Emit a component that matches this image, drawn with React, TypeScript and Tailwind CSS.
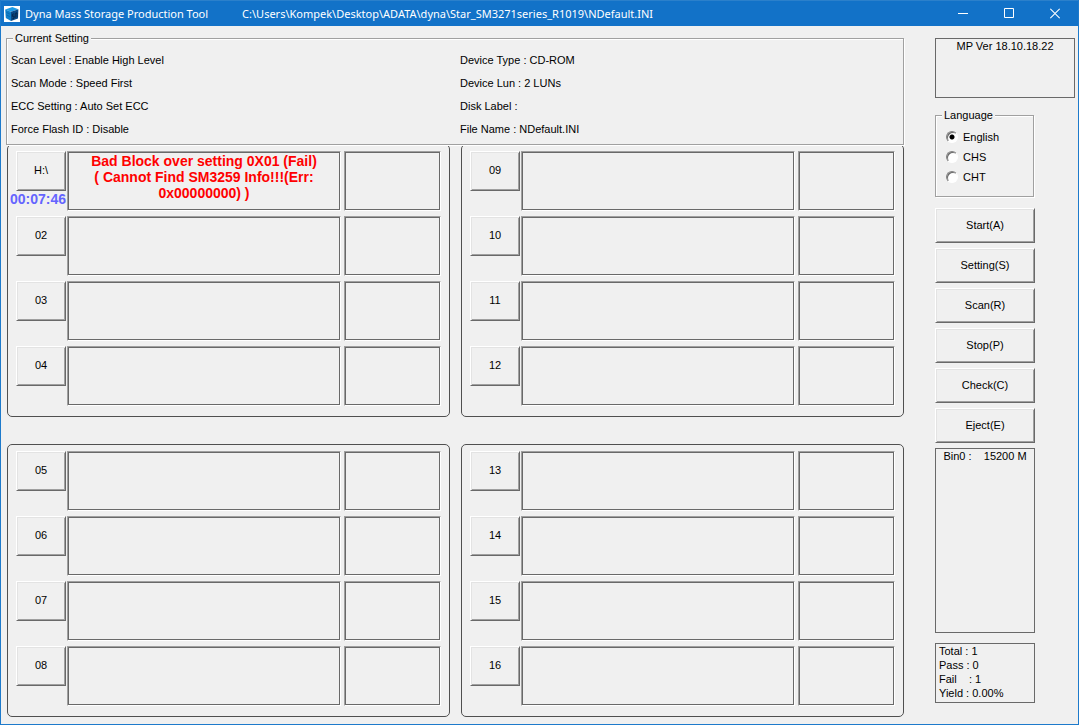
import React from 'react';

type Port = {
  label: string;
  time?: string;
  message?: string[];
};

const settingsLeft = [
  "Scan Level : Enable High Level",
  "Scan Mode : Speed First",
  "ECC Setting : Auto Set ECC",
  "Force Flash ID : Disable"
];

const settingsRight = [
  "Device Type : CD-ROM",
  "Device Lun : 2 LUNs",
  "Disk Label :",
  "File Name : NDefault.INI"
];

// panels in reading order: top left, top right, bottom left, bottom right
const panels: Port[][] = [
  [
    {
      label: "H:\\",
      time: "00:07:46",
      message: [
        "Bad Block over setting 0X01 (Fail)",
        "( Cannot Find SM3259 Info!!!(Err:",
        "0x00000000) )"
      ]
    },
    { label: "02" },
    { label: "03" },
    { label: "04" }
  ],
  [{ label: "09" }, { label: "10" }, { label: "11" }, { label: "12" }],
  [{ label: "05" }, { label: "06" }, { label: "07" }, { label: "08" }],
  [{ label: "13" }, { label: "14" }, { label: "15" }, { label: "16" }]
];

const actions = ["Start(A)", "Setting(S)", "Scan(R)", "Stop(P)", "Check(C)", "Eject(E)"];

const languages = ["English", "CHS", "CHT"];

const stats = ["Total : 1", "Pass : 0", "Fail    : 1", "Yield : 0.00%"];

const raised =
  "border border-t-white border-l-white border-r-[#696969] border-b-[#696969] shadow-[inset_1px_1px_0_#e3e3e3,inset_-1px_-1px_0_#a0a0a0] active:border-[#696969]";

const sunken =
  "border border-t-[#a0a0a0] border-l-[#a0a0a0] border-r-white border-b-white shadow-[inset_0_0_0_1px_#696969]";

const etched = "border border-[#a0a0a0] shadow-[1px_1px_0_#fff,inset_1px_1px_0_#fff]";

const AppIcon = () => (
  <svg width="16" height="16" viewBox="0 0 16 16" aria-hidden="true">
    <rect width="16" height="16" fill="#fff" />
    <path d="M1.2 3.4 8.4 1 14.4 3.2 7 5.8Z" fill="#1d9be6" />
    <path d="M1.2 3.4 7 5.8V15L1.8 12Z" fill="#0f7fca" />
    <path d="M7 5.8 14.4 3.2 14 12.4 7 15Z" fill="#0a4a86" />
    <path d="M8.4 8.4 10 7.8M8.4 8.4v2l1.6-.4v2.2l-1.6.6M11.2 11.8V7.4l1.8-.6v4.4" fill="none" stroke="#06213f" strokeWidth="0.8" />
    <path d="M2.4 6.4l3.4 1.6M2.6 9l3.2 1.6" stroke="#0b5d9c" strokeWidth="0.6" />
  </svg>
);

const TitleBar = () => (
  <header className="flex h-[26px] items-center border-t border-[#2b80cb] bg-[#1272c8] pl-[3px] font-['Noto_Sans','Open_Sans',sans-serif] text-[11px] leading-4 text-white">
    <AppIcon />
    <h1 className="ml-[5px] flex flex-1 gap-[34px] whitespace-nowrap">
      <span>Dyna Mass Storage Production Tool</span>
      <span>C:\Users\Kompek\Desktop\ADATA\dyna\Star_SM3271series_R1019\NDefault.INI</span>
    </h1>
    <button type="button" aria-label="Minimize" className="flex h-full w-[46px] items-center justify-center">
      <svg width="10" height="11" viewBox="0 0 10 11" stroke="#fff">
        <path d="M0 5.5h10" />
      </svg>
    </button>
    <button type="button" aria-label="Maximize" className="flex h-full w-[46px] items-center justify-center">
      <svg width="10" height="11" viewBox="0 0 10 11" fill="none" stroke="#fff">
        <path d="M.5.5h9v9h-9z" />
      </svg>
    </button>
    <button type="button" aria-label="Close" className="flex h-full w-[46px] items-center justify-center">
      <svg width="10" height="11" viewBox="0 0 10 11" stroke="#fff" strokeWidth="1.2">
        <path d="M.3.8l9.4 9.4M9.7.8.3 10.2" />
      </svg>
    </button>
  </header>
);

const PortRow = ({ port }: { port: Port }) => (
  <div className="flex h-[60px]">
    <div className="flex w-[58px] flex-col items-end">
      <button type="button" className={`h-10 w-[50px] pb-[2px] ${raised}`}>
        {port.label}
      </button>
      {port.time && (
        <time className="text-[14px] leading-4 font-bold text-[#6464ff]">{port.time}</time>
      )}
    </div>
    <div className={`ml-px flex-1 pt-px text-center text-[14px] leading-4 font-bold text-[#f00] ${sunken}`}>
      {port.message?.map((line) => (
        <p key={line} className="whitespace-nowrap">{line}</p>
      ))}
    </div>
    <div className={`ml-[3px] w-[97px] ${sunken}`} />
  </div>
);

const SettingsGroup = () => (
  <fieldset className={`relative z-10 h-[113px] bg-[#f0f0f0] pl-1 ${etched}`}>
    <legend className="ml-[2px] bg-[#f0f0f0] px-[2px] leading-[13px]">Current Setting</legend>
    <div className="grid grid-cols-2 gap-x-[6px] pt-1">
      {[settingsLeft, settingsRight].map((column, index) => (
        <ul key={index} className="leading-[23px] whitespace-nowrap">
          {column.map((item) => (
            <li key={item}>{item}</li>
          ))}
        </ul>
      ))}
    </div>
  </fieldset>
);

const LanguageGroup = () => (
  <fieldset className={`mt-[11px] h-[88px] w-[99px] pl-[10px] ${etched}`}>
    <legend className="-ml-1 bg-[#f0f0f0] px-[2px] leading-[13px]">Language</legend>
    <div className="pt-[5px]">
      {languages.map((language) => (
        <label key={language} className="flex h-5 items-center gap-[5px]">
          <input
            type="radio"
            name="language"
            defaultChecked={language === "English"}
            className="size-3 appearance-none rounded-full border border-t-[#808080] border-r-white border-b-white border-l-[#808080] bg-white shadow-[inset_1px_1px_0_#696969] checked:bg-[radial-gradient(circle,#000_2px,#fff_3px)]"
          />
          {language}
        </label>
      ))}
    </div>
  </fieldset>
);

const Sidebar = () => (
  <aside className="flex w-[140px] flex-col pt-[6px]">
    <div className="h-[60px] border border-[#696969] text-center leading-[14px]">MP Ver 18.10.18.22</div>
    <LanguageGroup />
    <div className="mt-[11px] flex w-[100px] flex-col gap-[5px]">
      {actions.map((action) => (
        <button key={action} type="button" className={`h-[35px] ${raised}`}>
          {action}
        </button>
      ))}
      <div className="h-[185px] border border-[#696969] text-center leading-[14px] whitespace-pre">
        {"Bin0 :    15200 M"}
      </div>
    </div>
    <div className="mt-[10px] h-[60px] w-[100px] border border-[#696969] pl-[3px] leading-[14px] whitespace-pre">
      {stats.map((stat) => (
        <p key={stat}>{stat}</p>
      ))}
    </div>
  </aside>
);

const App = () => {
  return (
    <div className="min-h-screen border-x border-b border-[#1d7acb] bg-[#f0f0f0] font-['Liberation_Sans',Arial,sans-serif] text-[11px] text-black">
      <TitleBar />
      <div className="flex gap-[31px] pt-[6px] pr-[3px] pb-[7px] pl-[5px]">
        <main className="min-w-0 flex-1">
          <SettingsGroup />
          <div className="-mt-px grid grid-cols-2 gap-x-[11px] gap-y-[27px] pl-px">
            {panels.map((ports, index) => (
              <section
                key={index}
                className="flex flex-col gap-[5px] rounded-[5px] border border-[#505050] pt-[6px] pr-[8px] pb-[10px]"
              >
                {ports.map((port) => (
                  <PortRow key={port.label} port={port} />
                ))}
              </section>
            ))}
          </div>
        </main>
        <Sidebar />
      </div>
    </div>
  );
};

export default App;
